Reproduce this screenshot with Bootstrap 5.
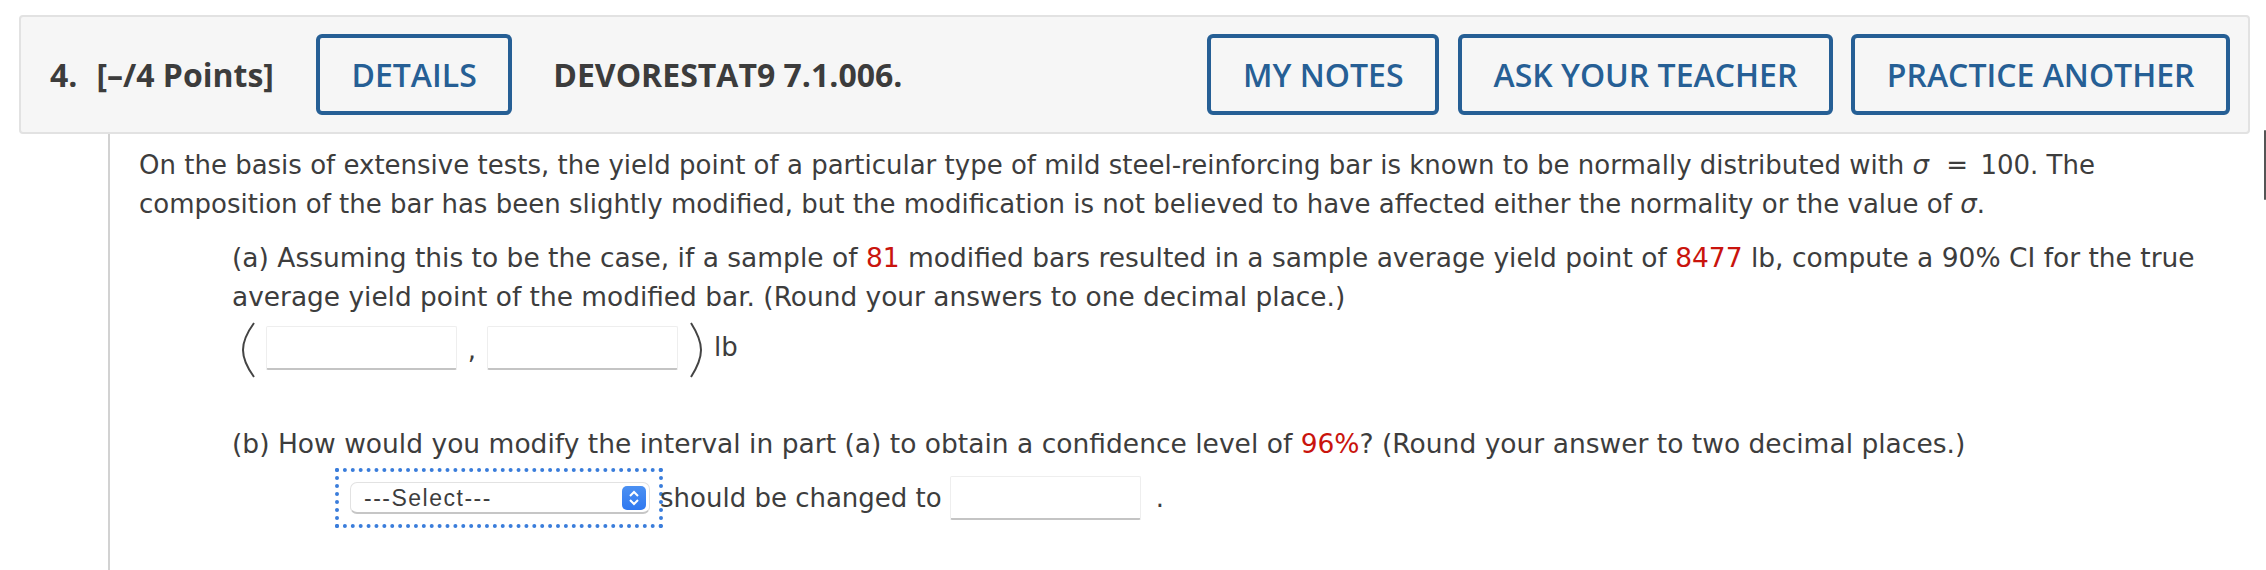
<!DOCTYPE html>
<html lang="en"><head><meta charset="utf-8"><title>Question 4</title>
<link rel="stylesheet" href="https://cdn.jsdelivr.net/npm/bootstrap@5.3.0/dist/css/bootstrap.min.css">
<style>
html,body{height:570px;overflow:hidden;background:#fff}
body{font-family:"DejaVu Sans",sans-serif;font-size:26px;line-height:39px;color:#3d3d3d;position:relative}
.qhead{margin:15px 16px 0 19px;height:119px;background:#f6f6f6;border:2px solid #e2e2e2;border-radius:4px;padding:0 18px 0 29px;font-family:"Open Sans",sans-serif;font-weight:700;font-size:32px;color:#3c3c3c}
.qnum{margin-right:19px}
.qpts{margin-right:42px}
.qbtn{height:81px;padding:0 31.5px;border:4px solid #265f95;border-radius:6px;color:#265f95;font-weight:600;font-size:32px;background:transparent;line-height:1;white-space:nowrap}
.qbtn:hover{color:#265f95;border-color:#265f95}
.qbtn.wide{padding:0 32px}
.qtitle{margin-left:41px}
.btngroup{gap:18.5px}
.qbody{margin-left:108px;border-left:2px solid #d2d2d2;padding:12px 40px 0 29px;height:440px}
.qpart{margin:14px 0 0 93px;font-size:26.4px}
.qline{display:block;white-space:nowrap}
.fit-a{font-size:26.47px}
.fit-b{font-size:26.5px}
.eq{margin:0 4px 0 9px}
.red{color:#c9140d}
.ansrow{height:56px;margin:6px 0 0 9px;font-size:26px}
.fld{width:191px;height:44px;background:#fff;border:1px solid #eee;border-bottom:2px solid #c4c4c4;border-radius:2px}
.paren{width:14px;height:56px;display:block}
.gapl{margin-left:11px}
.comma{width:30px;text-align:center;line-height:44px;padding-top:6px}
.lbl{line-height:50px}
.qb{margin-top:46px}
.selrow{margin:5px 0 0 103px;height:60px;font-size:26px}
.dotbox{width:328px;height:60px;border:4px dotted #3a7ddb;padding:10px 11px}
.fakesel{height:32px;width:300px;background:#fff;border:1px solid #e2e2e2;border-bottom:2px solid #c6c6c6;border-radius:7px;font:23px/28px "Liberation Sans",sans-serif;letter-spacing:1.5px;color:#3d3d3d;padding:0 3px 0 13px}
.arrowbox{width:24px;height:24px;border-radius:5px;background:linear-gradient(#4b90f2,#2f78f0)}
.stext{margin-left:-3px}
.fld3{margin:0 15px 0 8px}
.sidemark{position:absolute;right:0;top:130px;width:2px;height:70px;background:#555;border-radius:2px}
</style></head><body>
<div class="qhead d-flex align-items-center">
  <span class="qnum">4.</span><span class="qpts">[–/4 Points]</span>
  <a class="btn qbtn d-flex align-items-center" href="#">DETAILS</a>
  <span class="qtitle">DEVORESTAT9 7.1.006.</span>
  <div class="ms-auto d-flex btngroup">
    <a class="btn qbtn wide d-flex align-items-center" href="#">MY NOTES</a>
    <a class="btn qbtn d-flex align-items-center" href="#">ASK YOUR TEACHER</a>
    <a class="btn qbtn d-flex align-items-center" href="#">PRACTICE ANOTHER</a>
  </div>
</div>
<div class="sidemark"></div>
<div class="qbody">
  <div>
    <span class="qline">On the basis of extensive tests, the yield point of a particular type of mild steel-reinforcing bar is known to be normally distributed with <i>σ</i><span class="eq"> = </span>100. The</span>
    <span class="qline">composition of the bar has been slightly modified, but the modification is not believed to have affected either the normality or the value of <i>σ</i>.</span>
  </div>
  <div class="qpart">
    <span class="qline fit-a">(a) Assuming this to be the case, if a sample of <span class="red">81</span> modified bars resulted in a sample average yield point of <span class="red">8477</span> lb, compute a 90% CI for the true</span>
    <span class="qline">average yield point of the modified bar. (Round your answers to one decimal place.)</span>
    <div class="ansrow d-flex align-items-start">
      <svg class="paren" viewBox="0 0 14 56" aria-hidden="true"><path d="M13 1C5 12 2 20 2 28s3 16 11 27" fill="none" stroke="#444" stroke-width="2"/></svg>
      <span class="fld gapl mt-1"></span>
      <span class="comma">,</span>
      <span class="fld mt-1"></span>
      <svg class="paren gapl" viewBox="0 0 14 56" aria-hidden="true"><path d="M2 1C9 12 12 20 12 28s-3 16-10 27" fill="none" stroke="#444" stroke-width="2"/></svg>
      <span class="gapl lbl">lb</span>
    </div>
    <span class="qline qb fit-b">(b) How would you modify the interval in part (a) to obtain a confidence level of <span class="red">96%</span>? (Round your answer to two decimal places.)</span>
    <div class="selrow d-flex align-items-center">
      <div class="dotbox"><div class="fakesel d-flex align-items-center justify-content-between"><span>---Select---</span>
        <span class="arrowbox d-flex align-items-center justify-content-center"><svg width="14" height="20" viewBox="0 0 14 20" aria-hidden="true"><path d="M3 8l4-4 4 4M3 12l4 4 4-4" fill="none" stroke="#fff" stroke-width="2"/></svg></span></div></div>
      <span class="stext">should be changed to</span>
      <span class="fld fld3"></span><span>.</span>
    </div>
  </div>
</div>
</body></html>
